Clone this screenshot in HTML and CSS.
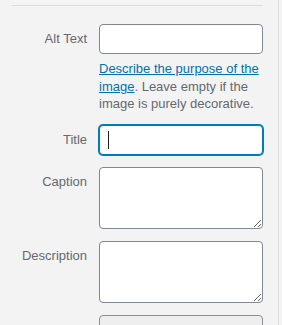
FILE: index.html
```html
<!DOCTYPE html>
<html>
<head>
<meta charset="utf-8">
<link rel="stylesheet" href="styles.css">
</head>
<body>
<div class="sidebar">
  <div class="divider"></div>
  <div class="settings">
    <div class="setting">
      <label class="name" for="alt">Alt Text</label>
      <div class="field">
        <input id="alt" class="input" type="text">
        <p class="help"><a href="#">Describe the purpose of the image</a>. Leave empty if the image is purely decorative.</p>
      </div>
    </div>
    <div class="setting">
      <label class="name" for="title">Title</label>
      <div class="field caret-wrap">
        <input id="title" class="input focused" type="text">
        <span class="caret"></span>
      </div>
    </div>
    <div class="setting">
      <label class="name" for="caption">Caption</label>
      <div class="field">
        <textarea id="caption" class="area"></textarea>
      </div>
    </div>
    <div class="setting">
      <label class="name" for="desc">Description</label>
      <div class="field">
        <textarea id="desc" class="area"></textarea>
      </div>
    </div>
    <div class="setting">
      <label class="name" for="url">File URL</label>
      <div class="field">
        <input id="url" class="input disabled" type="text" readonly>
      </div>
    </div>
  </div>
</div>
</body>
</html>
```

FILE: styles.css
```css
* { box-sizing: border-box; }
html, body { margin: 0; padding: 0; }
body {
  background: #f3f3f3;
  font-family: "Liberation Sans", Arial, sans-serif;
  font-size: 13px;
  color: #646970;
  height: 325px;
  overflow: hidden;
}
.sidebar {
  width: 279px;
  height: 400px;
  border-right: 1px solid #dfdfdf;
  padding: 5px 15px 0 12px;
}
.divider {
  height: 1px;
  background: #dcdcde;
  margin-bottom: 18px;
}
.settings {
  display: flex;
  flex-direction: column;
  gap: 12px;
}
.setting {
  display: grid;
  grid-template-columns: 75px 164px;
  column-gap: 12px;
  align-items: start;
}
.name {
  text-align: right;
  padding-top: 6px;
  line-height: 17px;
  color: #646970;
  white-space: nowrap;
}
.field { position: relative; }
.input, .area {
  display: block;
  width: 164px;
  margin: 0;
  border: 1px solid #7e8993;
  border-radius: 4px;
  background: #fff;
  font: inherit;
  outline: none;
}
.input { height: 30px; }
.area { height: 62px; resize: vertical; }
.focused {
  border-color: #007cba;
  box-shadow: 0 0 0 1px #007cba;
}
.disabled {
  background: #eeeeee;
  border-color: #8c8f94;
}
.help {
  margin: 6px 0 0;
  line-height: 17.6px;
  color: #646970;
}
.help a { color: #0073aa; text-decoration: underline; }
.caret {
  position: absolute;
  left: 9px;
  top: 6px;
  width: 1px;
  height: 18px;
  background: #1e1e1e;
}
```
